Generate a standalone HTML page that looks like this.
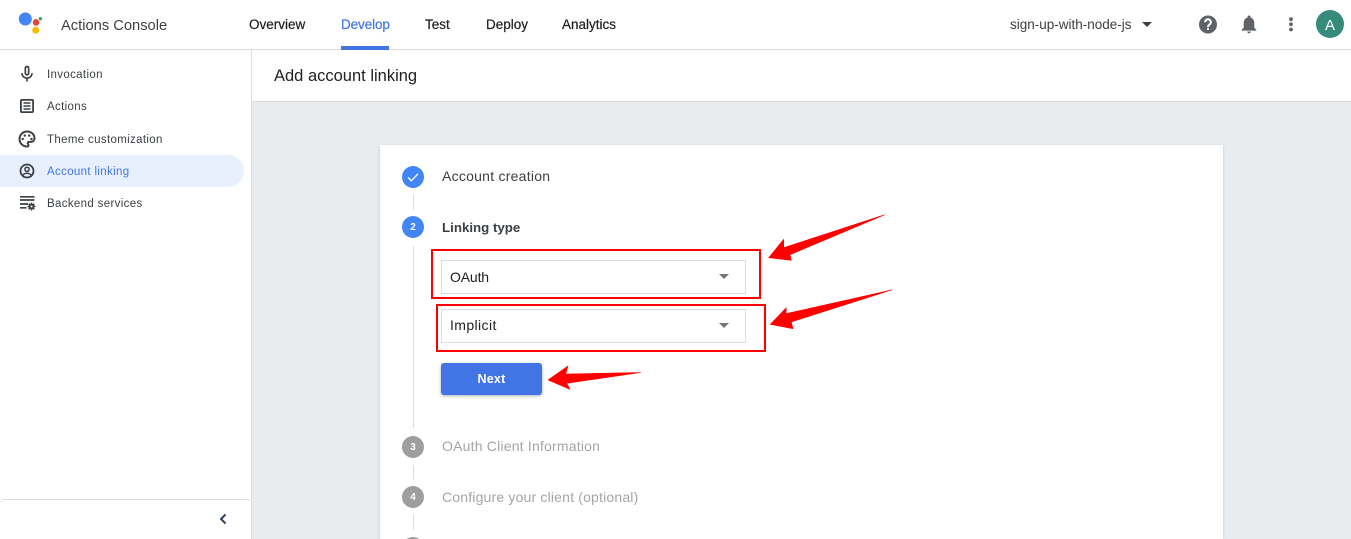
<!DOCTYPE html>
<html><head><meta charset="utf-8"><style>
html,body{margin:0;padding:0;width:1351px;height:539px;overflow:hidden}
#w{position:relative;width:1351px;height:539px;overflow:hidden;background:#e9ecef;font-family:"Liberation Sans",sans-serif;color:#202124}
.a{position:absolute;white-space:nowrap}
.nav{top:16px;font-size:13.5px;line-height:18px;color:#202124;-webkit-text-stroke:.2px}
.side{left:47px;font-size:11.5px;line-height:16px;color:#3c4043;letter-spacing:.34px}
.c{width:22px;height:22px;left:402px;border-radius:50%;color:#fff;font-size:10px;font-weight:bold;line-height:24px;text-align:center}
.l{width:1px;left:413px;background:#dadce0}
.st{left:442px;font-size:14px;line-height:20px;letter-spacing:.2px}
.sel{left:441px;width:303px;height:32px;background:#fff;border:1px solid #dadce0}
.sel span{position:absolute;left:8px;top:6px;font-size:14px;line-height:20px}
.sel i{position:absolute;left:277px;top:13px;width:0;height:0;border:5px solid transparent;border-top:5px solid #757575;border-bottom:0}
.rb{border:2px solid #f00;box-sizing:border-box}
svg{position:absolute;display:block}
</style></head><body><div id="w">
<div class="a" style="left:0;top:0;width:1351px;height:49px;background:#fff;border-bottom:1px solid #dadce0"></div>
<svg style="left:10px;top:5px" width="40" height="40"><circle cx="15.3" cy="14" r="6.5" fill="#4285f4"/><circle cx="26" cy="17.400" r="3.300" fill="#ea4335"/><circle cx="30.400" cy="13.700" r="1.700" fill="#34a853"/><circle cx="25.700" cy="25.300" r="3.500" fill="#fbbc04"/></svg>
<div class="a" style="left:61px;top:15px;font-size:14.700px;line-height:20px;color:#3c4043;padding-top:1px">Actions Console</div>
<div class="a nav" style="left:249px">Overview</div>
<div class="a nav" style="left:341px;color:#4175e6;letter-spacing:-.1px">Develop</div>
<div class="a nav" style="left:425px">Test</div>
<div class="a nav" style="left:486px">Deploy</div>
<div class="a nav" style="left:562px">Analytics</div>
<div class="a" style="left:341px;top:46px;width:48px;height:4px;background:#4175e6"></div>
<div class="a" style="left:1010px;top:16px;font-size:13.500px;line-height:18px;color:#3c4043">sign-up-with-node-js</div>
<div class="a" style="left:1142px;top:22px;width:0;height:0;border:5px solid transparent;border-top:5px solid #3c4043;border-bottom:0"></div>
<svg style="left:1196px;top:12px" width="24" height="24" viewBox="0 0 24 24"><circle cx="12" cy="12.500" r="9" fill="#5f6368"/><path d="M9.200 10.200a2.800 2.800 0 1 1 4.400 2.200c-1 .7-1.600 1.200-1.600 2.600" fill="none" stroke="#fff" stroke-width="2"/><rect x="11" y="16" width="2" height="2" fill="#fff"/></svg>
<svg style="left:1237px;top:12px" width="24" height="24" viewBox="0 0 24 24"><path fill="#5f6368" d="M12 21.300c1 0 1.800-.8 1.800-1.800h-3.600c0 1 .8 1.800 1.800 1.800zm5.300-5.500v-4.600c0-2.800-1.400-5-3.900-5.700v-.6a1.400 1.400 0 0 0-2.800 0v.6c-2.500.7-3.900 2.900-3.900 5.700v4.600l-2 1.900v.9h14.600v-.9l-2-1.900z"/></svg>
<svg style="left:1279px;top:12px" width="24" height="24" viewBox="0 0 24 24"><circle cx="12" cy="7.200" r="1.900" fill="#5f6368"/><circle cx="12" cy="12.300" r="1.900" fill="#5f6368"/><circle cx="12" cy="17.500" r="1.900" fill="#5f6368"/></svg>
<div class="a" style="left:1316px;top:10px;width:28px;height:28px;border-radius:50%;background:#378b7a;color:#fff;font-size:15px;line-height:31px;text-align:center">A</div>

<div class="a" style="left:0;top:50px;width:251px;height:489px;background:#fff;border-right:1px solid #dadce0"></div>
<div class="a" style="left:0;top:155px;width:244px;height:32px;background:#e8f0fe;border-radius:0 16px 16px 0"></div>
<svg style="left:17px;top:64px" width="20" height="20" viewBox="0 0 24 24"><path fill="#3c4043" d="M12 14c1.660 0 3-1.340 3-3V5c0-1.660-1.340-3-3-3S9 3.340 9 5v6c0 1.660 1.340 3 3 3zm-1-9c0-.55.45-1 1-1s1 .45 1 1v6c0 .55-.45 1-1 1s-1-.45-1-1V5zm6 6c0 2.760-2.240 5-5 5s-5-2.240-5-5H5c0 3.530 2.610 6.430 6 6.920V21h2v-3.080c3.390-.49 6-3.390 6-6.920h-2z"/></svg>
<svg style="left:15px;top:94px" width="24" height="24" viewBox="0 0 24 24"><rect x="5.900" y="5.900" width="12.200" height="12.200" rx="1" fill="none" stroke="#3c4043" stroke-width="1.800"/><path stroke="#3c4043" stroke-width="1.400" d="M8.500 9h7M8.500 12h7M8.500 15h7"/></svg>
<svg style="left:15px;top:127px" width="24" height="24" viewBox="0 0 24 24"><path fill="none" stroke="#3c4043" stroke-width="2" d="M12 4.500a7.500 7.500 0 0 0 0 15c1 0 1.500-.6 1.500-1.300 0-1-.8-1.200-.8-2 0-.8.600-1.300 1.400-1.300h1.600c2.200 0 3.800-1.500 3.800-3.500C19.500 7.300 16.100 4.500 12 4.500z"/><circle cx="7.700" cy="12" r="1.200" fill="#3c4043"/><circle cx="9.800" cy="8.600" r="1.200" fill="#3c4043"/><circle cx="14.200" cy="8.600" r="1.200" fill="#3c4043"/><circle cx="16.500" cy="12" r="1.200" fill="#3c4043"/></svg>
<svg style="left:15px;top:159px" width="24" height="24" viewBox="0 0 24 24"><circle cx="12" cy="12" r="6.500" fill="none" stroke="#3c4043" stroke-width="1.800"/><circle cx="12" cy="10.300" r="2.100" fill="none" stroke="#3c4043" stroke-width="1.500"/><path fill="none" stroke="#3c4043" stroke-width="1.500" d="M7.800 16.300c1.200-1.500 2.600-2 4.200-2s3 .5 4.200 2"/></svg>
<svg style="left:15px;top:191px" width="24" height="24" viewBox="0 0 24 24"><path stroke="#3c4043" stroke-width="1.700" d="M5 5.800h14.500M5 9h14.500M5 13h8M5 16.800h6.500"/><path stroke="#3c4043" stroke-width="1.500" d="M16.500 11.500v8M12.500 15.500h8M13.700 12.700l5.600 5.600M19.300 12.700l-5.600 5.600"/><circle cx="16.500" cy="15.500" r="2.900" fill="#3c4043"/><circle cx="16.500" cy="15.500" r="1" fill="#fff"/></svg>
<div class="a side" style="top:67px">Invocation</div>
<div class="a side" style="top:99px">Actions</div>
<div class="a side" style="top:132px">Theme customization</div>
<div class="a side" style="top:164px;color:#4175e6">Account linking</div>
<div class="a side" style="top:196px">Backend services</div>
<div class="a" style="left:0;top:499px;width:251px;height:40px;border-top:1px solid #dadce0;border-radius:4px 4px 0 0;box-sizing:border-box"></div>
<svg style="left:216px;top:512px" width="14" height="14" viewBox="0 0 14 14"><path d="M9.500 2.500L5 7l4.500 4.500" fill="none" stroke="#303f60" stroke-width="2"/></svg>

<div class="a" style="left:252px;top:50px;width:1099px;height:51px;background:#fff;border-bottom:1px solid #dadce0"></div>
<div class="a" style="left:274px;top:65px;font-size:16.500px;line-height:22px">Add account linking</div>

<div class="a" style="left:380px;top:145px;width:843px;height:394px;background:#fff;box-shadow:0 1px 3px rgba(60,64,67,.2)"></div>
<div class="a c" style="top:166px;background:#4285f4"><svg style="left:4px;top:4px" width="14" height="14" viewBox="0 0 14 14"><path d="M2 7.500l3.300 3.300L12 3.800" fill="none" stroke="#fff" stroke-width="1.400"/></svg></div>
<div class="a st" style="top:166px;color:#3c4043;letter-spacing:.25px">Account creation</div>
<div class="a l" style="top:195px;height:15px"></div>
<div class="a c" style="top:216px;background:#4285f4">2</div>
<div class="a st" style="top:218px;font-weight:bold;color:#3c4043;font-size:13.300px;letter-spacing:0">Linking type</div>
<div class="a l" style="top:246px;height:182px"></div>
<div class="a sel" style="top:260px"><span style="letter-spacing:-.15px">OAuth</span><i></i></div>
<div class="a sel" style="top:309px"><span style="top:5px;letter-spacing:.4px">Implicit</span><i></i></div>
<div class="a rb" style="left:431px;top:249px;width:330px;height:50px"></div>
<div class="a rb" style="left:436px;top:304px;width:330px;height:48px"></div>
<div class="a" style="left:441px;top:363px;width:101px;height:32px;background:#4175e6;border-radius:3px;box-shadow:0 1px 3px rgba(60,64,67,.4);color:#fff;font-size:12.500px;font-weight:bold;line-height:33px;text-align:center;letter-spacing:.2px">Next</div>
<div class="a c" style="top:436px;background:#9e9e9e">3</div>
<div class="a st" style="top:436px;color:#a5a5a5">OAuth Client Information</div>
<div class="a l" style="top:465px;height:15px"></div>
<div class="a c" style="top:486px;background:#9e9e9e">4</div>
<div class="a st" style="top:487px;color:#a5a5a5;letter-spacing:.18px">Configure your client (optional)</div>
<div class="a l" style="top:515px;height:15px"></div>
<div class="a c" style="top:537px;background:#9e9e9e"></div>

<svg style="left:0;top:0" width="1351" height="539"><g fill="#f00" stroke="#f00" stroke-width=".6" stroke-linejoin="round">
<polygon points="768.700,257.700 783.700,239.300 783.700,247.700 884.500,214.800 790,254.700 791.300,260.300"/>
<polygon points="770.300,324.300 786.300,307.700 786,313.700 892,289.800 791.300,322 793,328.700"/>
<polygon points="548,380 568,366 565.700,374 640.700,372.500 566.700,383.300 570,389.300"/>
</g></svg>
</div></body></html>
